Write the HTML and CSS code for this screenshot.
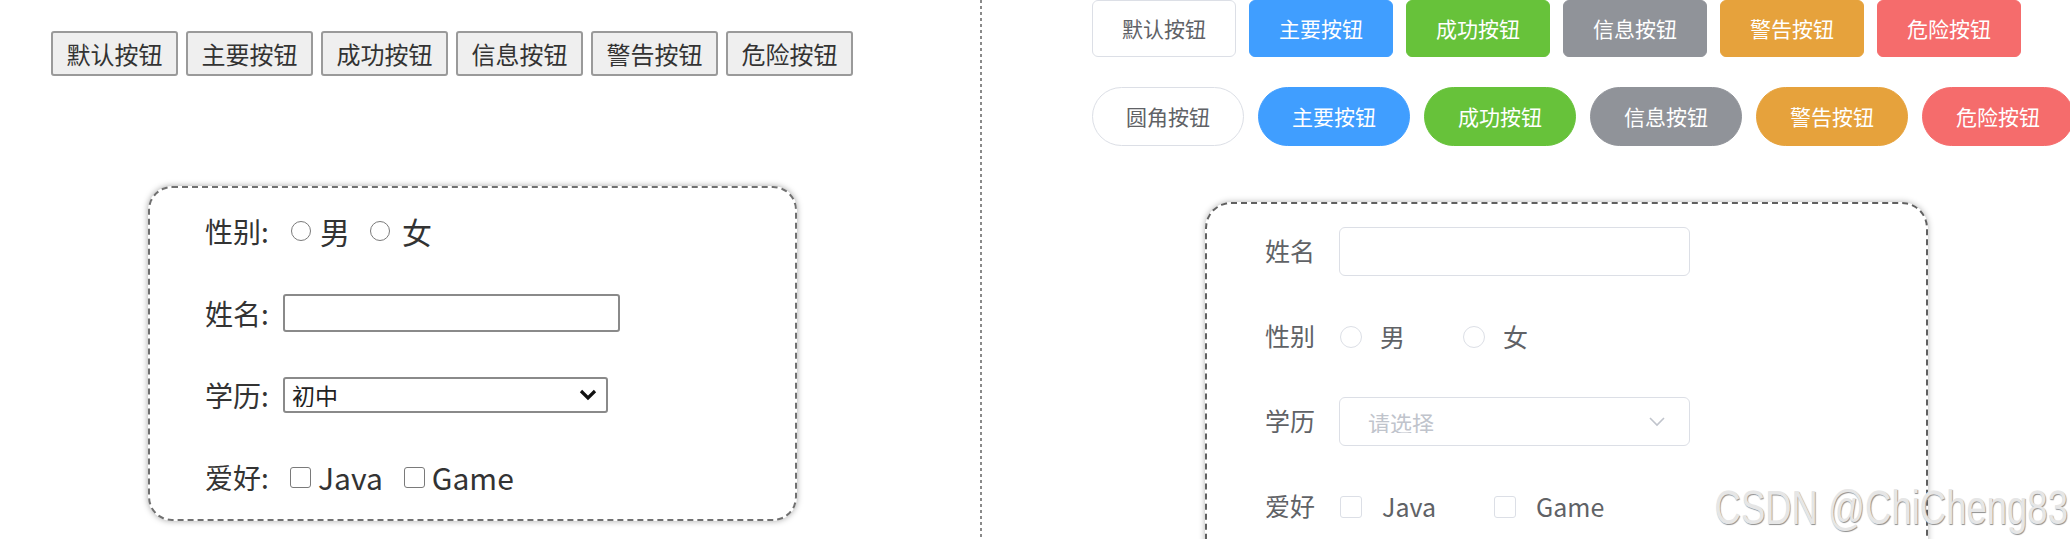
FILE: index.html
```html
<!DOCTYPE html>
<html lang="zh">
<head>
  <meta charset="UTF-8">
  <title>按钮与表单</title>
  <link rel="stylesheet" href="styles.css">
</head>
<body>
  <div class="page">
    <!-- 原生 HTML -->
    <div class="native">
      <div class="n-btns">
        <button class="n-btn">默认按钮</button>
        <button class="n-btn">主要按钮</button>
        <button class="n-btn">成功按钮</button>
        <button class="n-btn">信息按钮</button>
        <button class="n-btn">警告按钮</button>
        <button class="n-btn">危险按钮</button>
      </div>
      <form class="n-card">
        <div class="n-row">
          <span class="n-label">性别:</span>
          <label class="n-opt"><input type="radio" name="sex" class="n-radio">男</label>
          <label class="n-opt"><input type="radio" name="sex" class="n-radio">女</label>
        </div>
        <div class="n-row">
          <span class="n-label">姓名:</span>
          <input type="text" class="n-text">
        </div>
        <div class="n-row">
          <span class="n-label">学历:</span>
          <div class="n-select">
            <select>
              <option>初中</option>
              <option>高中</option>
              <option>本科</option>
            </select>
            <svg width="18" height="12" viewBox="0 0 18 12"><polyline points="2,2 9,9 16,2" fill="none" stroke="#111" stroke-width="3.2"/></svg>
          </div>
        </div>
        <div class="n-row">
          <span class="n-label">爱好:</span>
          <label class="n-opt"><input type="checkbox" class="n-check">Java</label>
          <label class="n-opt"><input type="checkbox" class="n-check">Game</label>
        </div>
      </form>
    </div>

    <div class="divider"></div>

    <!-- Element UI -->
    <div class="element">
      <div class="el-btns">
        <button class="el-btn">默认按钮</button>
        <button class="el-btn primary">主要按钮</button>
        <button class="el-btn success">成功按钮</button>
        <button class="el-btn info">信息按钮</button>
        <button class="el-btn warning">警告按钮</button>
        <button class="el-btn danger">危险按钮</button>
      </div>
      <div class="el-btns round">
        <button class="el-btn">圆角按钮</button>
        <button class="el-btn primary">主要按钮</button>
        <button class="el-btn success">成功按钮</button>
        <button class="el-btn info">信息按钮</button>
        <button class="el-btn warning">警告按钮</button>
        <button class="el-btn danger">危险按钮</button>
      </div>
      <form class="el-card">
        <div class="el-row">
          <span class="el-label">姓名</span>
          <input type="text" class="el-input">
        </div>
        <div class="el-row">
          <span class="el-label">性别</span>
          <label class="el-opt"><input type="radio" name="gender" class="el-radio">男</label>
          <label class="el-opt"><input type="radio" name="gender" class="el-radio">女</label>
        </div>
        <div class="el-row">
          <span class="el-label">学历</span>
          <div class="el-select">
            <select class="el-input">
              <option value="" selected hidden>请选择</option>
              <option>初中</option>
              <option>高中</option>
            </select>
            <svg width="16" height="10" viewBox="0 0 16 10"><polyline points="1,1 8,8 15,1" fill="none" stroke="#c0c4cc" stroke-width="1.6"/></svg>
          </div>
        </div>
        <div class="el-row">
          <span class="el-label">爱好</span>
          <label class="el-opt"><input type="checkbox" class="el-check">Java</label>
          <label class="el-opt"><input type="checkbox" class="el-check">Game</label>
        </div>
      </form>
    </div>

    <div class="watermark">CSDN @ChiCheng83</div>
  </div>
</body>
</html>
```

FILE: styles.css
```css
body { margin: 0; font-family: "Noto Sans CJK SC", sans-serif; background: #fff; overflow: hidden; }
.page { position: relative; display: flex; height: 539px; }

/* left: plain html */
.native { width: 980px; flex-shrink: 0; box-sizing: border-box; padding: 31px 0 0 51px; }
.n-btns { display: flex; gap: 8px; }
.n-btn { height: 45px; padding: 0 13.5px; font: 24px/1 "Noto Sans CJK SC", sans-serif; color: #333; background: #efefef; border: 2px solid #9a9a9a; border-radius: 3px; }
.n-card { width: 649px; height: 335px; box-sizing: border-box; margin: 110px 0 0 97px; padding: 23px 0 0 55px; border: 2px dashed #707070; border-radius: 24px; box-shadow: 0 0 6px rgba(0,0,0,.35); display: flex; flex-direction: column; gap: 42px; }
.n-row { display: flex; align-items: center; height: 40px; font-size: 28px; line-height: 1; color: #333; }
.n-label { width: 66px; margin-right: 12px; }
.n-opt { display: flex; align-items: center; margin-right: 12px; font-size: 30px; }
.n-radio { appearance: none; width: 20px; height: 20px; margin: 0 9px 0 8px; border: 1.5px solid #7a7a7a; border-radius: 50%; background: #fff; }
.n-opt + .n-opt .n-radio { margin-right: 12px; }
.n-check { appearance: none; width: 21px; height: 21px; margin: 0 7px 0 7px; border: 1.5px solid #7a7a7a; border-radius: 3px; background: #fff; }
.n-opt + .n-opt .n-check { margin-left: 9px; }
.n-text { width: 337px; height: 38px; box-sizing: border-box; border: 2px solid #8a8a8a; border-radius: 3px; }
.n-select { position: relative; }
.n-select select { appearance: none; width: 325px; height: 36px; box-sizing: border-box; padding: 0 7px; font: 23px/1 "Noto Sans CJK SC", sans-serif; color: #222; background: #fff; border: 2px solid #8a8a8a; border-radius: 3px; }
.n-select svg { position: absolute; right: 11px; top: 12px; }

.divider { width: 2px; flex-shrink: 0; background: repeating-linear-gradient(to bottom, #8a8a8a 0 3px, transparent 3px 6px); }

/* right: element ui */
.element { flex: 1; min-width: 0; padding-left: 110px; }
.el-btns { display: flex; gap: 13px; }
.el-btns.round { margin-top: 30px; gap: 14px; }
.el-btn { flex-shrink: 0; height: 57px; padding: 0 29px; font: 21px/1 "Noto Sans CJK SC", sans-serif; color: #606266; background: #fff; border: 1px solid #dcdfe6; border-radius: 6px; white-space: nowrap; }
.round .el-btn { height: 59px; padding: 0 33px; border-radius: 30px; }
.el-btn.primary { background: #409eff; border-color: #409eff; color: #fff; }
.el-btn.success { background: #67c23a; border-color: #67c23a; color: #fff; }
.el-btn.info { background: #909399; border-color: #909399; color: #fff; }
.el-btn.warning { background: #e6a23c; border-color: #e6a23c; color: #fff; }
.el-btn.danger { background: #f56c6c; border-color: #f56c6c; color: #fff; }

.el-card { width: 723px; height: 400px; box-sizing: border-box; margin: 56px 0 0 113px; padding: 23px 0 0 58px; border: 2px dashed #606060; border-radius: 26px; box-shadow: 0 0 6px rgba(0,0,0,.3); display: flex; flex-direction: column; gap: 36px; }
.el-row { display: flex; align-items: center; height: 49px; font-size: 25px; line-height: 1; color: #606266; }
.el-label { width: 50px; margin-right: 24px; padding-bottom: 3px; }
.el-input { width: 351px; height: 49px; box-sizing: border-box; border: 1px solid #dcdfe6; border-radius: 6px; background: #fff; }
.el-opt { display: flex; align-items: center; margin-right: 57px; }
.el-radio { appearance: none; width: 22px; height: 22px; margin: 0 18px 0 1px; border: 1px solid #dcdfe6; border-radius: 50%; background: #fff; }
.el-check { appearance: none; width: 22px; height: 22px; margin: 0 20px 0 1px; border: 1px solid #dcdfe6; border-radius: 3px; background: #fff; }
.el-select { position: relative; }
.el-select select { appearance: none; padding: 0 28px; font: 22px/1 "Noto Sans CJK SC", sans-serif; color: #c0c4cc; }
.el-select svg { position: absolute; right: 25px; top: 20px; }

.watermark { position: absolute; right: 2px; top: 484px; font: 48px/1 "Liberation Sans", sans-serif; color: #e6e6e6; text-shadow: 1px 1px 1px #8f8f8f; transform: scaleX(0.76); transform-origin: right center; white-space: nowrap; }
```
